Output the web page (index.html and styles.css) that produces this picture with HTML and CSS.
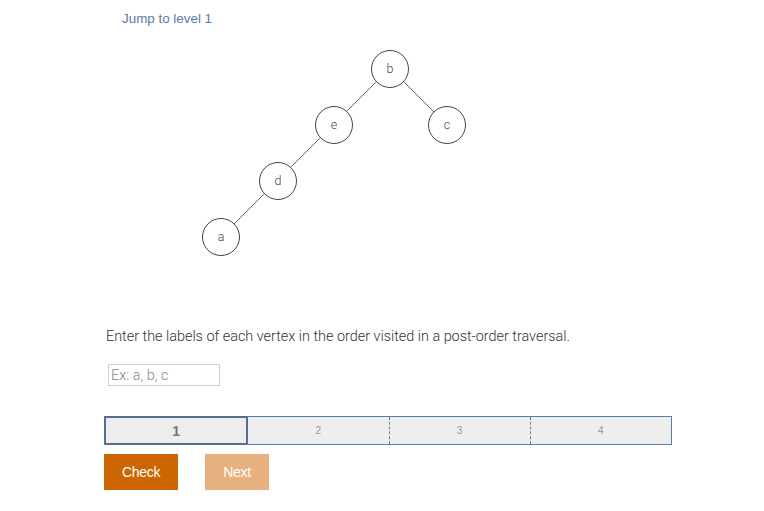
FILE: index.html
```html
<!DOCTYPE html>
<html>
<head>
<meta charset="utf-8">
<link rel="stylesheet" href="styles.css">
</head>
<body>
<div class="page">
  <div class="jump">Jump to level 1</div>
  <svg class="tree" width="568" height="260" viewBox="0 0 568 260">
    <g class="edges">
      <line x1="273" y1="41" x2="243" y2="71"/>
      <line x1="299" y1="41" x2="330" y2="72"/>
      <line x1="217" y1="97" x2="187" y2="127"/>
      <line x1="161" y1="153" x2="130" y2="184"/>
    </g>
    <g class="nodes">
      <circle cx="286" cy="29" r="18.5"/>
      <circle cx="230" cy="85" r="18.5"/>
      <circle cx="343" cy="85" r="18.5"/>
      <circle cx="174" cy="141" r="18.5"/>
      <circle cx="117" cy="197" r="18.5"/>
    </g>
    <g class="labels">
      <text x="286" y="33">b</text>
      <text x="230" y="89">e</text>
      <text x="343" y="89">c</text>
      <text x="174" y="145">d</text>
      <text x="117" y="201">a</text>
    </g>
  </svg>
  <p class="prompt">Enter the labels of each vertex in the order visited in a post-order traversal.</p>
  <input class="answer" type="text" placeholder="Ex: a, b, c">
  <div class="progress">
    <div class="seg current">1</div>
    <div class="seg">2</div>
    <div class="seg">3</div>
    <div class="seg">4</div>
  </div>
  <div class="buttons">
    <button class="btn check">Check</button>
    <button class="btn next">Next</button>
  </div>
</div>
</body>
</html>
```
FILE: styles.css
```css
html, body {
  margin: 0;
  padding: 0;
  background: #fff;
}
.page {
  width: 568px;
  padding-left: 104px;
  font-family: "Liberation Sans", Arial, sans-serif;
}
.jump {
  padding-left: 18px;
  padding-top: 11px;
  height: 29px;
  box-sizing: border-box;
  font-size: 13.4px;
  line-height: 16px;
  color: #5b7aa3;
}
.tree {
  display: block;
  margin-top: 11px;
}
.edges line {
  stroke: #666;
  stroke-width: 1;
}
.nodes circle {
  fill: #fff;
  stroke: #444;
  stroke-width: 1;
}
.labels text {
  font-family: Roboto, "Liberation Sans", sans-serif;
  font-weight: 300;
  font-size: 12.5px;
  fill: #444;
  text-anchor: middle;
}
.prompt {
  margin: 28px 0 0 2px;
  font-family: Roboto, "Liberation Sans", sans-serif;
  font-weight: 300;
  font-size: 14.4px;
  line-height: 18px;
  color: #333;
}
.answer {
  display: block;
  margin: 18px 0 0 4px;
  width: 112px;
  height: 22px;
  box-sizing: border-box;
  border: 1px solid #ccd0d3;
  padding: 0 0 0 2px;
  font-family: Roboto, "Liberation Sans", sans-serif;
  font-weight: 300;
  font-size: 14.4px;
  color: #333;
  outline: none;
}
.answer::placeholder {
  color: #888;
}
.progress {
  display: flex;
  margin-top: 30px;
  height: 29px;
  width: 568px;
  box-sizing: border-box;
  border: 1px solid #5b7ea6;
  background: #eee;
}
.seg {
  flex: 1;
  display: flex;
  align-items: center;
  justify-content: center;
  font-size: 10px;
  color: #999;
  border-left: 1px dashed #5b7ea6;
}
.seg.current {
  border: 2px solid #566f91;
  margin: -1px 0 -1px -1px;
  font-size: 14px;
  font-weight: bold;
  color: #777;
}
.seg.current + .seg {
  border-left: none;
}
.buttons {
  display: flex;
  gap: 27px;
  margin-top: 9px;
}
.btn {
  height: 36px;
  border: none;
  color: #fff;
  font-family: "Liberation Sans", Arial, sans-serif;
  font-size: 14px;
  padding: 0;
  letter-spacing: -0.3px;
}
.check {
  width: 74px;
  background: #cc6600;
}
.next {
  width: 64px;
  background: #e7b17f;
}
```
